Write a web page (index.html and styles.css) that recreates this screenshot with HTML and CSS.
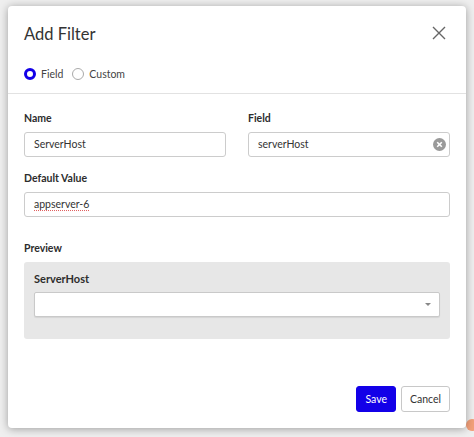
FILE: index.html
```html
<!DOCTYPE html>
<html>
<head>
<meta charset="utf-8">
<link rel="stylesheet" href="styles.css">
</head>
<body>
<div class="page">
  <div class="bg-dot"></div>
  <div class="dialog">
    <div class="header">
      <div class="title-row">
        <h1 class="title">Add Filter</h1>
        <svg class="close" width="20" height="20" viewBox="0 0 20 20"><path d="M4 4 L16 16 M16 4 L4 16" stroke="#666" stroke-width="1.4" fill="none"/></svg>
      </div>
      <div class="radios">
        <span class="radio on"></span><span class="rlabel">Field</span>
        <span class="radio off"></span><span class="rlabel">Custom</span>
      </div>
    </div>
    <div class="body">
      <div class="row2">
        <div class="group">
          <div class="label">Name</div>
          <div class="input">ServerHost</div>
        </div>
        <div class="group">
          <div class="label">Field</div>
          <div class="input with-clear">serverHost
            <svg class="clear" width="13" height="13" viewBox="0 0 13 13"><circle cx="6.5" cy="6.5" r="6.5" fill="#9a9a9a"/><path d="M4.2 4.2 L8.8 8.8 M8.8 4.2 L4.2 8.8" stroke="#fff" stroke-width="1.6"/></svg>
          </div>
        </div>
      </div>
      <div class="group">
        <div class="label">Default Value</div>
        <div class="input"><span class="spell">appserver-6</span></div>
      </div>
      <div class="group preview-group">
        <div class="label">Preview</div>
        <div class="preview">
          <div class="label plabel">ServerHost</div>
          <div class="select"><span class="caret"></span></div>
        </div>
      </div>
    </div>
    <div class="footer">
      <button class="btn save">Save</button>
      <button class="btn cancel">Cancel</button>
    </div>
  </div>
</div>
</body>
</html>
```
FILE: styles.css
```css
* { box-sizing: border-box; }
html, body { margin: 0; padding: 0; }
body {
  font-family: Lato, "Noto Sans", sans-serif;
  color: #333;
}
.page {
  position: relative;
  width: 474px;
  height: 437px;
  overflow: hidden;
  background: #efefef;
  padding: 6px 0 0 8px;
}
.bg-dot {
  position: absolute;
  left: 466px;
  top: 419px;
  width: 12px;
  height: 12px;
  border-radius: 50%;
  background: #f3a07a;
}
.dialog {
  position: relative;
  width: 458px;
  height: 422px;
  background: #fff;
  border-radius: 4px;
  box-shadow: 0 1px 8px rgba(0,0,0,0.35);
  display: flex;
  flex-direction: column;
}
.header {
  padding: 17px 17px 12px 16px;
  border-bottom: 1px solid #e2e2e2;
}
.title-row {
  display: flex;
  align-items: center;
  justify-content: space-between;
}
.title {
  margin: 0;
  font-size: 16.5px;
  line-height: 22px;
  font-weight: 400;
  color: #333;
}
.close { display: block; margin-top: -2px; }
.radios {
  margin-top: 22px;
  display: flex;
  align-items: center;
  height: 14px;
  font-size: 10.5px;
  line-height: 14px;
}
.radio {
  width: 12px;
  height: 12px;
  border-radius: 50%;
  display: inline-block;
}
.radio.on { border: 3.5px solid #1300e8; background: #fff; }
.radio.off { border: 1px solid #aaa; background: #fff; margin-left: 9px; }
.rlabel { margin-left: 5px; color: #444; }
.body {
  padding: 16px 16px 0 16px;
}
.row2 {
  display: grid;
  grid-template-columns: 202px 202px;
  column-gap: 22px;
}
.group { margin-bottom: 13px; }
.label {
  font-size: 10.5px;
  font-weight: 700;
  line-height: 16px;
  margin-bottom: 6px;
  color: #2d2d2d;
}
.input {
  position: relative;
  height: 25px;
  border: 1px solid #ccc;
  border-radius: 3px;
  padding: 0 9px;
  font-size: 10.5px;
  line-height: 23px;
  color: #333;
}
.spell {
  text-decoration: underline dotted #e06060;
  text-underline-offset: 2px;
}
.clear {
  position: absolute;
  right: 3px;
  top: 5px;
}
.preview-group { margin-top: 23px; margin-bottom: 0; }
.preview {
  background: #e7e7e7;
  border-radius: 3px;
  padding: 9px 10px 22px 10px;
}
.plabel { font-size: 11px; margin-bottom: 5px; }
.select {
  position: relative;
  height: 25px;
  background: #fff;
  border: 1px solid #c9c9c9;
  border-radius: 2px;
  box-shadow: 0 1px 1px rgba(0,0,0,0.08);
}
.caret {
  position: absolute;
  right: 8px;
  top: 10px;
  width: 0;
  height: 0;
  border-left: 3px solid transparent;
  border-right: 3px solid transparent;
  border-top: 3px solid #888;
}
.footer {
  margin-top: auto;
  padding: 0 16px 16px 16px;
  display: flex;
  justify-content: flex-end;
  gap: 5px;
}
.btn {
  height: 26px;
  font-family: Lato, "Noto Sans", sans-serif;
  font-size: 10.5px;
  border-radius: 3px;
  padding: 0 8px;
  cursor: pointer;
}
.save {
  background: #1300e8;
  border: 1px solid #1300e8;
  color: #fff;
}
.cancel {
  background: #fff;
  border: 1px solid #c8c8c8;
  color: #333;
}
```
